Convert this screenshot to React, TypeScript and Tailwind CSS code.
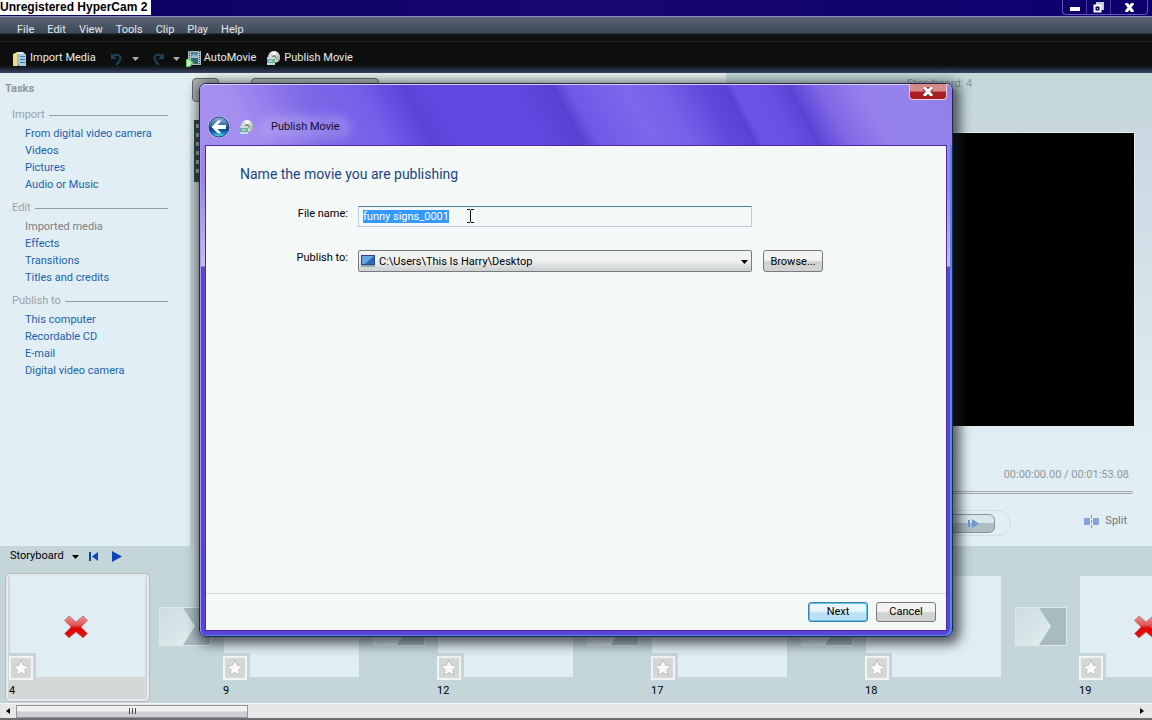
import React, { useState, useEffect, useRef } from 'react';

interface TaskItem {
  label: string;
  disabled?: boolean;
}

interface TaskGroup {
  title: string;
  items: TaskItem[];
}

interface Clip {
  label: string;
  selected?: boolean;
  missing?: boolean;
}

const menuItems = ['File', 'Edit', 'View', 'Tools', 'Clip', 'Play', 'Help'];

const taskGroups: TaskGroup[] = [
  {
    title: 'Import',
    items: [
      { label: 'From digital video camera' },
      { label: 'Videos' },
      { label: 'Pictures' },
      { label: 'Audio or Music' },
    ],
  },
  {
    title: 'Edit',
    items: [
      { label: 'Imported media', disabled: true },
      { label: 'Effects' },
      { label: 'Transitions' },
      { label: 'Titles and credits' },
    ],
  },
  {
    title: 'Publish to',
    items: [
      { label: 'This computer' },
      { label: 'Recordable CD' },
      { label: 'E-mail' },
      { label: 'Digital video camera' },
    ],
  },
];

const clips: Clip[] = [
  { label: '4', selected: true, missing: true },
  { label: '9' },
  { label: '12' },
  { label: '17' },
  { label: '18' },
  { label: '19', missing: true },
];

const ImportIcon = () => (
  <svg width="16" height="16" viewBox="0 0 16 16">
    <path d="M1 3l4-2v13l-4 1z" fill="#e8c968" />
    <path d="M1 3h5v12H1z" fill="#f1dc8c" />
    <path d="M5 1h6l2 2v11H5z" fill="#d9e9f2" />
    <path d="M7 3h7v12H7z" fill="#a9cbe0" />
    <path d="M8 5.500h5M8 8.500h5M8 11.500h5" stroke="#3f78a0" />
    <path d="M6 3v11" stroke="#5c93ad" />
  </svg>
);

const UndoIcon = ({ flipped = false }: { flipped?: boolean }) => (
  <svg width="14" height="14" viewBox="0 0 14 14" className={flipped ? '-scale-x-100' : ''}>
    <path d="M3 4C8 1 12 4 10 8c-1 2-2 3-4 5" fill="none" stroke="#1f4257" strokeWidth="2" />
    <path d="M1 1v6h6z" fill="#1f4257" />
  </svg>
);

const AutoMovieIcon = () => (
  <svg width="16" height="16" viewBox="0 0 16 16">
    <path d="M2 0h13v14H2z" fill="#a9bfc4" />
    <path d="M5 1h7v5H5z" fill="#4d8796" />
    <path d="M5 7h7v6H5z" fill="#2f6479" />
    <path d="M5 6l3-3 2 2 2-2v3z" fill="#8fc0c4" />
    <path d="M3.500 0v14M13.500 0v14" stroke="#35505b" strokeDasharray="1 1" />
    <path d="M0 8h4l4 4-4 4H0z" fill="#62c964" />
    <path d="M1 9h2l3 3-3 3H1z" fill="#c4f5bd" />
  </svg>
);

const PublishIcon = () => (
  <svg width="14" height="15" viewBox="0 0 14 15">
    <circle cx="8" cy="6" r="6" fill="#d5d9d2" />
    <path d="M8 6L5 1a6 6 0 0 1 6 0z" fill="#f7faf6" />
    <path d="M8 6l6-1a6 6 0 0 1-2 6z" fill="#b2bbae" />
    <circle cx="8" cy="6" r="2" fill="#77847f" />
    <path d="M1 6h8v8H1z" fill="#6fa9b6" />
    <path d="M1 6h8v2H1zM1 12h8v2H1z" fill="#c3dde0" />
    <path d="M3 10h4" stroke="#e9f8fa" />
    <path d="M6 8l3 2-3 3z" fill="#75c27a" />
  </svg>
);

const DownArrow = ({ className = '' }: { className?: string }) => (
  <svg width="7" height="4" viewBox="0 0 7 4" className={className} fill="currentColor">
    <path d="M0 0h7L3.500 4z" />
  </svg>
);

const BackIcon = () => (
  <svg width="24" height="24" viewBox="0 0 24 24">
    <defs>
      <linearGradient id="backFill" x1="0" y1="0" x2="0" y2="1">
        <stop offset="0" stopColor="#8fb4dc" />
        <stop offset="0.480" stopColor="#2a5f9f" />
        <stop offset="0.500" stopColor="#06386f" />
        <stop offset="0.750" stopColor="#0e6bb0" />
        <stop offset="1" stopColor="#4fe0f2" />
      </linearGradient>
    </defs>
    <circle cx="12" cy="12" r="11" fill="#b9c8ea" />
    <circle cx="12" cy="12" r="10" fill="url(#backFill)" stroke="#26407c" />
    <path d="M4.500 12L11 5.500h3.500L10.500 10H19v4h-8.500l4 4.500H11z" fill="#fff" />
  </svg>
);

const MissingIcon = () => (
  <svg width="26" height="26" viewBox="0 0 26 26" className="shrink-0">
    <defs>
      <linearGradient id="missingFill" x1="0" y1="0" x2="0" y2="1">
        <stop offset="0" stopColor="#ec8f8f" />
        <stop offset="0.400" stopColor="#e25a5a" />
        <stop offset="0.550" stopColor="#e00808" />
        <stop offset="1" stopColor="#dc1010" />
      </linearGradient>
    </defs>
    <path
      d="M6 2l7 6 7-6 4.500 4.500L18 13l6.500 6.500L20 24l-7-6-7 6-4.500-4.500L8 13 1.500 6.500z"
      fill="url(#missingFill)"
      stroke="#c87c7c"
      strokeWidth="1"
      strokeLinejoin="round"
    />
  </svg>
);

const StarBadge = () => (
  <div className="flex size-6 items-center justify-center border-2 border-[#f1f4f4] bg-[#d6d8d8]">
    <svg width="18" height="18" viewBox="0 0 18 18">
      <path
        d="M9 1l2.400 5.300 5.600.6-4.200 3.800 1.200 5.700L9 13.500l-5 2.900 1.200-5.700L1 6.900l5.600-.6z"
        fill="#fafafa"
        stroke="#bfc1c1"
        strokeLinejoin="round"
      />
    </svg>
  </div>
);

const TransitionTile = () => (
  <svg width="52" height="40" viewBox="0 0 52 40" className="mt-[33px] shrink-0">
    <defs>
      <linearGradient id="tileFill" x1="0" y1="0" x2="1" y2="1">
        <stop offset="0" stopColor="#cddcdf" />
        <stop offset="1" stopColor="#e2edef" />
      </linearGradient>
    </defs>
    <path d="M0.500 0.500h51v38h-51z" fill="#a7bbc0" stroke="#dde8ea" />
    <path d="M1 1h23l12 18-12 19H1z" fill="url(#tileFill)" />
  </svg>
);

const Titlebar = () => (
  <header className="flex h-4 items-start justify-between bg-linear-to-r from-[#07005f] via-[#17076f] to-[#0c006d]">
    <h1 className="h-[15px] bg-white pr-1 font-['Liberation_Sans'] text-[12px] leading-[15px] font-bold text-black">
      Unregistered HyperCam 2
    </h1>
    <div className="mr-1 flex h-[15px] rounded-b border border-t-0 border-[#6655ae] text-white">
      <button aria-label="Minimize" className="flex w-6 items-center justify-center border-r border-[#4c3b9c]">
        <svg width="10" height="4" viewBox="0 0 10 4" className="mt-1"><path d="M0 0h10v4H0z" fill="#fff" /></svg>
      </button>
      <button aria-label="Restore" className="flex w-6 items-center justify-center border-r border-[#4c3b9c]">
        <svg width="11" height="11" viewBox="0 0 11 11">
          <path d="M3 0h8v8H8V3H3z" fill="#c9c9dc" />
          <path d="M1.500 3.500h6v6h-6z" fill="#0c006d" stroke="#fff" strokeWidth="2" />
          <path d="M4 6h1v1H4z" fill="#fff" />
        </svg>
      </button>
      <button aria-label="Close" className="flex w-9 items-center justify-center">
        <svg width="9" height="9" viewBox="0 0 9 9"><path d="M1 0l7 9M8 0L1 9" stroke="#fff" strokeWidth="3" /></svg>
      </button>
    </div>
  </header>
);

const Toolbar = () => (
  <div className="flex h-8 items-center border-t border-[#1f2322] bg-linear-to-b from-[#0c0f0e] from-75% to-[#3a4568] pt-0.5 pl-3 text-[#e6eaea]">
    <button className="flex items-center gap-0.5">
      <ImportIcon />
      Import Media
    </button>
    <button aria-label="Undo" className="ml-3.5"><UndoIcon /></button>
    <button aria-label="Undo history" className="ml-2 text-[#a9adad]"><DownArrow /></button>
    <button aria-label="Redo" className="ml-3"><UndoIcon flipped /></button>
    <button aria-label="Redo history" className="ml-2 text-[#a9adad]"><DownArrow /></button>
    <button className="ml-1.5 flex items-center gap-0.5">
      <AutoMovieIcon />
      AutoMovie
    </button>
    <button className="ml-2.5 flex items-center gap-1">
      <PublishIcon />
      Publish Movie
    </button>
  </div>
);

const TaskPane = () => (
  <aside className="w-[190px] shrink-0 bg-[#e1eef3] pt-2">
    <h2 className="pl-[5px] leading-4 font-bold text-[#8f979b]">Tasks</h2>
    <div className="mt-[9px] flex flex-col gap-1.5 pr-[22px] pl-3">
      {taskGroups.map(group => (
        <section key={group.title}>
          <h3 className="flex h-[19px] items-center gap-1 text-[#9aa3a7]">
            {group.title}
            <span className="h-px flex-1 bg-[#8fa0a6]" />
          </h3>
          <ul className="pl-[13px] leading-[17px] whitespace-nowrap">
            {group.items.map(item => (
              <li key={item.label}>
                {item.disabled ? (
                  <span className="text-[#7d8285]">{item.label}</span>
                ) : (
                  <a href="#" className="text-[#1c62b0]">{item.label}</a>
                )}
              </li>
            ))}
          </ul>
        </section>
      ))}
    </div>
  </aside>
);

const ContentsPane = () => (
  <section className="flex-1 bg-linear-to-b from-[#e9f1f0] to-[#c6d2d4] to-20%">
    <div className="flex gap-8 pt-[5px] pl-0.5">
      <span className="h-6 w-[27px] rounded border border-[#626a6b] bg-[#a9b0b0]" />
      <span className="h-6 w-32 rounded border border-[#626a6b] bg-[#b6bcbb]" />
    </div>
    <div className="mt-[18px] ml-1 w-4 bg-[#31403f] py-1 pl-0.5">
      <div className="h-[54px] w-1 bg-[repeating-linear-gradient(#9aa9a7_0_4px,#31403f_4px_9px)]" />
    </div>
  </section>
);

const PreviewPane = () => (
  <section className="flex w-[426px] shrink-0 flex-col bg-linear-to-b from-[#c3d8d8] via-[#cbd8e2] via-15% to-[#e1eef3] to-80% pr-[17px]">
    <h2 className="pt-[3px] pl-[181px] leading-4 text-[#8b9799]">Storyboard: 4</h2>
    <div className="mt-10 h-[295px] border border-l-0 border-[#e9f0f2] bg-black" />
    <p className="mt-10 pr-1.5 text-right leading-4 text-[#8d979b]">00:00:00.00 / 00:01:53.08</p>
    <div className="mt-2 mr-0.5 h-[3px] rounded-full border border-[#a2abae] bg-[#dce7ea]" />
    <div className="mt-4 flex items-center justify-between pr-2">
      <div className="ml-[200px] flex h-[26px] w-[85px] items-center rounded-full border border-[#d2dee2]">
        <button aria-label="Next frame" className="ml-6 flex h-[19px] w-11 items-center justify-center rounded-r-md border border-[#8195a0] bg-linear-to-b from-[#d9e7ec] from-50% to-[#adbec6] to-50%">
          <svg width="11" height="9" viewBox="0 0 11 9"><path d="M0 1h2v7H0zM4 0l7 4.500L4 9z" fill="#6e98cf" /></svg>
        </button>
      </div>
      <button className="mb-1 flex items-center gap-1.5 text-[#6f787c]">
        <svg width="15" height="13" viewBox="0 0 15 13">
          <path d="M0 3h6v7H0zM9 3h6v7H9z" fill="#86a5d8" />
          <path d="M7.500 0v13" stroke="#7d93c4" strokeDasharray="3 2" />
        </svg>
        Split
      </button>
    </div>
  </section>
);

const Storyboard = () => (
  <section className="h-[157px] shrink-0 overflow-hidden bg-[#c4d6da]">
    <div className="mb-[7px] flex h-[21px] items-center pl-2.5 text-black">
      <button className="flex items-center gap-2">
        Storyboard
        <DownArrow />
      </button>
      <button aria-label="Rewind" className="ml-2.5">
        <svg width="9" height="9" viewBox="0 0 9 9" fill="#0b46b4"><path d="M0 0h2v9H0zM9 0v9L3 4.500z" /></svg>
      </button>
      <button aria-label="Play" className="ml-3.5">
        <svg width="10" height="11" viewBox="0 0 10 11" fill="#0b46b4"><path d="M0 0l10 5.500L0 11z" /></svg>
      </button>
    </div>
    <ul className="flex pl-1.5">
      {clips.map(clip => (
        <li key={clip.label} className="flex w-[214px] shrink-0 gap-2.5">
          <figure
            className={`w-[143px] rounded-sm border-2 px-0.5 ${
              clip.selected ? 'border-[#e6eaea] bg-[#d3d7d7] outline outline-[#b4bfc1]' : 'border-transparent'
            }`}
          >
            <div className="flex h-[101px] items-center justify-center bg-[#e0edf3] pr-1">
              {clip.missing && <MissingIcon />}
            </div>
            <div className="relative">
              <div className="absolute -top-6 -left-px border-t-3 border-r-3 border-[#c4d6da]">
                <StarBadge />
              </div>
            </div>
            <figcaption className="-ml-px pt-1.5 leading-4 text-black">{clip.label}</figcaption>
          </figure>
          <TransitionTile />
        </li>
      ))}
    </ul>
  </section>
);

const Scrollbar = () => (
  <div className="flex h-[17px] shrink-0 items-center border-t border-b-2 border-t-[#f3f5f5] border-b-[#706a75] bg-[#e6e8e7]">
    <button aria-label="Scroll left" className="flex w-4 justify-center">
      <svg width="4" height="6" viewBox="0 0 4 6"><path d="M4 0v6L0 3z" /></svg>
    </button>
    <div className="flex h-[13px] w-[232px] items-center justify-center gap-0.5 border border-[#929697] bg-linear-to-b from-[#f0f1f1] from-45% to-[#cbcecf] to-55%">
      <span className="h-1.5 w-px bg-[#4a4d4f]" />
      <span className="h-1.5 w-px bg-[#4a4d4f]" />
      <span className="h-1.5 w-px bg-[#4a4d4f]" />
    </div>
    <button aria-label="Scroll right" className="ml-auto flex w-5 justify-center">
      <svg width="4" height="6" viewBox="0 0 4 6"><path d="M0 0v6l4-3z" /></svg>
    </button>
  </div>
);

const PublishDialog = () => {
  const [fileName, setFileName] = useState('funny signs_0001');
  const inputRef = useRef<HTMLInputElement>(null);

  useEffect(() => {
    inputRef.current?.focus();
    inputRef.current?.select();
  }, []);

  return (
    <div className="absolute inset-0 flex items-center justify-center">
      <div
        role="dialog"
        aria-labelledby="dialog-title"
        className="relative flex h-[554px] w-[754px] flex-col rounded-[7px] border border-[#26264a] bg-[linear-gradient(#a28bf0_0,#9b83ec_100px,#c9bdf5_182px,#5a45d8_183px,#5a45d8_100%)] px-[5px] pb-[5px] shadow-[3px_3px_12px_4px_rgba(20,30,35,0.7),inset_-2px_-1px_0_#4a8ae8,inset_1px_0_0_#a99af0]"
      >
        <div className="absolute inset-x-0 top-0 h-[61px] rounded-t-[6px] border-t border-[#d7cffb] bg-[linear-gradient(62deg,#a48ff0_0%,#a48ff0_7%,#927bec_12%,#7d68e8_17%,#7460e8_24%,#6650e4_27%,#5a44d8_30%,#6048e0_33%,#6048e0_44%,#5841d2_49%,#7058e8_51%,#7d67ea_58%,#7560e8_63%,#6048dc_68%,#5842d4_71%,#6c52e6_72%,#6a50e4_76%,#5a44d6_79%,#8068e6_83%,#9580ec_88%,#9583ec_94%,#8f7ce8_100%)]" />
        <div className="relative h-[61px] shrink-0">
          <button
            aria-label="Close dialog"
            className="absolute top-0 right-0 flex h-4 w-[38px] items-center justify-center rounded-b border border-t-0 border-[#e6c9e2] bg-linear-to-b from-[#d68a8c] from-45% to-[#a81f22] to-55%"
          >
            <svg width="10" height="9" viewBox="0 0 10 9">
              <path d="M1 0l8 9M9 0L1 9" stroke="#6b3038" strokeWidth="5" />
              <path d="M1 0l8 9M9 0L1 9" stroke="#fff" strokeWidth="3" />
            </svg>
          </button>
          <div className="flex items-center pt-[31px] pl-0.5">
            <button aria-label="Back"><BackIcon /></button>
            <span className="ml-2"><PublishIcon /></span>
            <h2 id="dialog-title" className="ml-2.5 rounded-full bg-white/15 px-2 leading-4 text-[#15102e] shadow-[0_0_8px_4px_rgba(255,255,255,0.15)]">
              Publish Movie
            </h2>
          </div>
        </div>
        <form className="relative flex flex-1 flex-col border border-[#4d2a9e] bg-[#f4f8f6]" onSubmit={e => e.preventDefault()}>
          <h3 className="pt-4 pl-[34px] text-[14px] leading-6 text-[#1c4587]">Name the movie you are publishing</h3>
          <div className="mt-5 flex items-center text-black">
            <label htmlFor="file-name" className="mb-1 w-[142px] text-right">File name:</label>
            <input
              id="file-name"
              ref={inputRef}
              value={fileName}
              onChange={e => setFileName(e.target.value)}
              className="ml-2.5 h-[21px] w-[394px] border border-[#b5cfe0] border-t-[#4f7fa0] px-1 outline-none selection:bg-[#3399ff] selection:text-white"
            />
          </div>
          <div className="mt-[23px] flex items-center text-black">
            <label htmlFor="publish-to" className="mb-1.5 w-[142px] text-right">Publish to:</label>
            <div className="relative ml-2.5 flex">
              <select
                id="publish-to"
                className="h-[22px] w-[394px] appearance-none rounded-xs border border-[#777b7c] bg-linear-to-b from-[#f1f3f2] from-45% to-[#cfd2d2] to-95% pt-0.5 pl-5"
              >
                <option>C:\Users\This Is Harry\Desktop</option>
              </select>
              <svg width="14" height="12" viewBox="0 0 14 12" className="absolute top-[5px] left-[3px]">
                <path d="M0 0h14v10H0z" fill="#23497d" />
                <path d="M1 1h12v8H1z" fill="#2b66bb" />
                <path d="M1 1h12L4 9H1z" fill="#6aa4e0" />
                <path d="M0 10h14v2H0z" fill="#93a9b8" />
              </svg>
              <DownArrow className="pointer-events-none absolute top-[10px] right-1" />
            </div>
            <button className="ml-[11px] h-[22px] w-[60px] rounded-[3px] border border-[#777b7c] bg-linear-to-b from-[#f3f3f3] from-45% to-[#d2d2d2] to-55% pt-0.5">
              Browse...
            </button>
          </div>
          <div className="mt-auto flex justify-end gap-2 border-t border-[#d9dedd] pt-2 pr-2.5 pb-2 text-black">
            <button type="submit" className="h-5 w-[60px] rounded-[3px] border border-[#3c7fb1] bg-linear-to-b from-[#e9f5fb] from-45% to-[#b9e0f3] to-55% ring-1 ring-[#5ec4e6] ring-inset">
              Next
            </button>
            <button type="button" className="h-5 w-[60px] rounded-[3px] border border-[#777b7c] bg-linear-to-b from-[#f3f3f3] from-45% to-[#d2d2d2] to-55%">
              Cancel
            </button>
          </div>
        </form>
        {/* text cursor */}
        <svg width="7" height="14" viewBox="0 0 7 14" className="pointer-events-none absolute top-[125px] left-[267px]">
          <path d="M0 .5h3M4 .5h3M3.500 1v12M0 13.500h3M4 13.500h3" stroke="#111" />
        </svg>
      </div>
    </div>
  );
};

const App: React.FC = () => {
  return (
    <div className="relative flex min-h-screen flex-col overflow-hidden bg-[#c4d6da] font-['Roboto','Open_Sans',sans-serif] text-[11px]">
      <Titlebar />
      <nav className="flex h-[25px] items-center gap-[13px] border-t border-[#8f8bb8] bg-linear-to-b from-[#5b6474] via-[#3c4957] via-65% to-[#0c1110] to-75% pt-0.5 pl-[17px] text-[#e3e7ea]">
        {menuItems.map(item => (
          <button key={item}>{item}</button>
        ))}
      </nav>
      <Toolbar />
      <main className="flex flex-1">
        <TaskPane />
        <ContentsPane />
        <PreviewPane />
      </main>
      <Storyboard />
      <Scrollbar />
      <PublishDialog />
    </div>
  );
};

export default App;
